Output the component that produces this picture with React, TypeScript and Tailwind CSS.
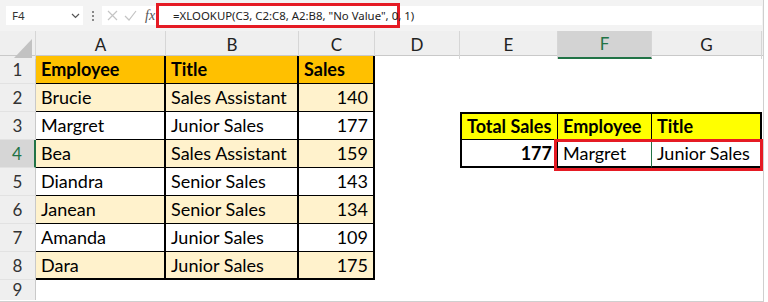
import React from 'react';

const cols = 'grid grid-cols-[36px_130px_133px_76px_85px_98px_94px_110px]';
const letters = ['A', 'B', 'C', 'D', 'E', 'F', 'G'];

const rows: [string, string, number][] = [
  ['Brucie', 'Sales Assistant', 140],
  ['Margret', 'Junior Sales', 177],
  ['Bea', 'Sales Assistant', 159],
  ['Diandra', 'Senior Sales', 143],
  ['Janean', 'Senior Sales', 134],
  ['Amanda', 'Junior Sales', 109],
  ['Dara', 'Junior Sales', 175],
];

function RowHead({ n, active, short }: { n: number; active?: boolean; short?: boolean }) {
  return (
    <div
      className={
        (short ? 'h-[20px] ' : 'h-[28px] border-b border-[#e2e2e2] ') +
        'flex items-center justify-center text-[17px] ' +
        (active
          ? 'bg-[#d6d6d6] text-[#217346] border-r-2 border-r-[#217346]'
          : 'bg-[#efefef] text-[#333] border-r border-r-[#c9c9c9]')
      }
    >
      {n}
    </div>
  );
}

function Cell({ children, className = '' }: { children?: React.ReactNode; className?: string }) {
  return (
    <div className={'h-[28px] flex items-center px-[5px] whitespace-nowrap overflow-hidden text-black ' + className}>
      {children}
    </div>
  );
}

export default function App() {
  return (
    <div className="w-[768px] h-[302px] overflow-hidden bg-white" style={{ fontFamily: 'Lato, "Noto Sans", sans-serif' }}>
      <div className="w-[764px] h-[302px] border-r border-b border-[#cfcfcf] overflow-hidden">
        {/* Formula bar */}
        <div className="h-[31px] bg-[#f3f3f3] flex items-center pl-[6px] pr-[1px]" style={{ fontFamily: '"Noto Sans", sans-serif' }}>
          <div className="w-[77px] h-[19px] bg-white flex items-center justify-between pl-[6px] pr-[3px] text-[11.5px] text-[#333]">
            <span>F4</span>
            <svg width="9" height="6" viewBox="0 0 9 6">
              <path d="M1 1l3.5 3.5L8 1" fill="none" stroke="#555" strokeWidth="1.2" />
            </svg>
          </div>
          <div className="w-[19px] flex flex-col items-center justify-center gap-[2px]">
            <span className="w-[2px] h-[2px] bg-[#666] rounded-full" />
            <span className="w-[2px] h-[2px] bg-[#666] rounded-full" />
            <span className="w-[2px] h-[2px] bg-[#666] rounded-full" />
          </div>
          <div className="flex-1 h-[19px] bg-white flex items-center">
            <svg width="11" height="11" viewBox="0 0 11 11" className="ml-[5px]">
              <path d="M1 1l9 9M10 1l-9 9" stroke="#c4c4c4" strokeWidth="1.2" />
            </svg>
            <svg width="13" height="11" viewBox="0 0 13 11" className="ml-[6px]">
              <path d="M1 6l4 4 7-9" fill="none" stroke="#c4c4c4" strokeWidth="1.2" />
            </svg>
            <span className="ml-[8px] italic text-[14px] text-[#555] leading-none" style={{ fontFamily: '"Liberation Serif", serif' }}>
              fx
            </span>
            <div className="ml-[1px] -my-[3px] h-[25px] w-[244px] border-[3px] border-[#e51b24] flex items-center pl-[14px] text-[11.4px] text-[#222] whitespace-nowrap">
              =XLOOKUP(C3, C2:C8, A2:B8, "No Value", 0, 1)
            </div>
          </div>
        </div>

        {/* Sheet */}
        <div className="relative">
          <div className={cols + ' h-[25px] bg-[#efefef] border-b border-[#c9c9c9]'}>
            <div className="relative border-r border-[#d6d6d6]">
              <div className="absolute right-[3px] bottom-[1px] w-0 h-0 border-l-[18px] border-l-transparent border-b-[19px] border-b-[#c2c2c2]" />
            </div>
            {letters.map((l) => (
              <div
                key={l}
                className={
                  'flex items-center justify-center text-[17px] border-r border-[#d6d6d6] ' +
                  (l === 'F' ? 'bg-[#d3d3d3] text-[#217346] border-b-2 border-b-[#217346]' : 'text-[#222]')
                }
              >
                {l}
              </div>
            ))}
          </div>

          {/* Row 1 */}
          <div className={cols}>
            <RowHead n={1} />
            <Cell className="bg-[#ffc000] font-bold text-[18px] border-r-2 border-b border-black">Employee</Cell>
            <Cell className="bg-[#ffc000] font-bold text-[18px] border-r-2 border-b border-black">Title</Cell>
            <Cell className="bg-[#ffc000] font-bold text-[18px] border-r-2 border-b border-black">Sales</Cell>
            <Cell />
            <Cell />
            <Cell />
            <Cell />
          </div>

          {rows.map(([emp, title, sales], i) => {
            const n = i + 2;
            const bg = i % 2 === 0 ? 'bg-[#fff2cc]' : 'bg-white';
            const last = n === 8;
            const bb = last ? 'border-b-2 border-black' : 'border-b border-black';
            return (
              <div key={n} className={cols}>
                <RowHead n={n} active={n === 4} />
                <Cell className={bg + ' text-[18px] border-r-2 ' + bb}>{emp}</Cell>
                <Cell className={bg + ' text-[18px] border-r-2 ' + bb}>{title}</Cell>
                <Cell className={bg + ' text-[18px] justify-end border-r-2 ' + bb}>{sales}</Cell>
                <Cell />
                {n === 3 ? (
                  <>
                    <Cell className="bg-[#ffff00] font-bold text-[18px] border-l-2 border-t-2 border-r border-b border-black">Total Sales</Cell>
                    <Cell className="bg-[#ffff00] font-bold text-[18px] border-t-2 border-r border-b border-black">Employee</Cell>
                    <Cell className="bg-[#ffff00] font-bold text-[18px] border-t-2 border-r-2 border-b border-black">Title</Cell>
                  </>
                ) : n === 4 ? (
                  <>
                    <Cell className="font-bold text-[18px] justify-end border-l-2 border-b-2 border-r border-black">177</Cell>
                    <Cell className="text-[18px] border-b-2 border-r border-r-[#217346] border-b-black">Margret</Cell>
                    <Cell className="text-[18px] border-b-2 border-r-2 border-black">Junior Sales</Cell>
                  </>
                ) : (
                  <>
                    <Cell />
                    <Cell />
                    <Cell />
                  </>
                )}
              </div>
            );
          })}

          <div className={cols}>
            <RowHead n={9} short />
          </div>

          {/* Highlight box over F4:G4 */}
          <div className="absolute left-[554px] top-[108px] w-[209px] h-[32px] border-[3px] border-[#e51b24] pointer-events-none" />
        </div>
      </div>
    </div>
  );
}
